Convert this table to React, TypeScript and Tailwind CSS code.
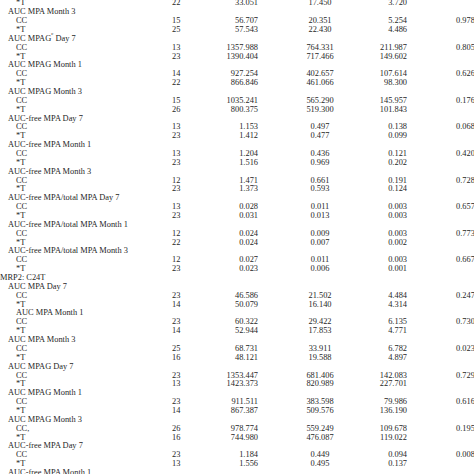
import React from 'react'

type Row = {
  label: React.ReactNode
  indent: 0 | 1 | 2
  n?: string
  mean?: string
  sd?: string
  se?: string
  p?: string
}

const g = (label: React.ReactNode, indent: 0 | 1 | 2 = 1): Row => ({ label, indent })
const cc = (n: string, mean: string, sd: string, se: string, p: string, label = 'CC'): Row => ({
  label,
  indent: 2,
  n,
  mean,
  sd,
  se,
  p
})
const t = (n: string, mean: string, sd: string, se: string): Row => ({ label: '*T', indent: 2, n, mean, sd, se })

const rows: Row[] = [
  t('22', '33.051', '17.450', '3.720'),
  g('AUC MPA Month 3'),
  cc('15', '56.707', '20.351', '5.254', '0.978'),
  t('25', '57.543', '22.430', '4.486'),
  g(
    <>
      AUC MPAG<sup className="text-[5px] relative -top-[1px] align-top">c</sup> Day 7
    </>
  ),
  cc('13', '1357.988', '764.331', '211.987', '0.805'),
  t('23', '1390.404', '717.466', '149.602'),
  g('AUC MPAG Month 1'),
  cc('14', '927.254', '402.657', '107.614', '0.626'),
  t('22', '866.846', '461.066', '98.300'),
  g('AUC MPAG Month 3'),
  cc('15', '1035.241', '565.290', '145.957', '0.176'),
  t('26', '800.375', '519.300', '101.843'),
  g('AUC-free MPA Day 7'),
  cc('13', '1.153', '0.497', '0.138', '0.068'),
  t('23', '1.412', '0.477', '0.099'),
  g('AUC-free MPA Month 1'),
  cc('13', '1.204', '0.436', '0.121', '0.420'),
  t('23', '1.516', '0.969', '0.202'),
  g('AUC-free MPA Month 3'),
  cc('12', '1.471', '0.661', '0.191', '0.728'),
  t('23', '1.373', '0.593', '0.124'),
  g('AUC-free MPA/total MPA Day 7'),
  cc('13', '0.028', '0.011', '0.003', '0.657'),
  t('23', '0.031', '0.013', '0.003'),
  g('AUC-free MPA/total MPA Month 1'),
  cc('12', '0.024', '0.009', '0.003', '0.773'),
  t('22', '0.024', '0.007', '0.002'),
  g('AUC-free MPA/total MPA Month 3'),
  cc('12', '0.027', '0.011', '0.003', '0.667'),
  t('23', '0.023', '0.006', '0.001'),
  g('MRP2: C24T', 0),
  g('AUC MPA Day 7'),
  cc('23', '46.586', '21.502', '4.484', '0.247'),
  t('14', '50.079', '16.140', '4.314'),
  g('AUC MPA Month 1', 2),
  cc('23', '60.322', '29.422', '6.135', '0.730'),
  t('14', '52.944', '17.853', '4.771'),
  g('AUC MPA Month 3'),
  cc('25', '68.731', '33.911', '6.782', '0.023'),
  t('16', '48.121', '19.588', '4.897'),
  g('AUC MPAG Day 7'),
  cc('23', '1353.447', '681.406', '142.083', '0.729'),
  t('13', '1423.373', '820.989', '227.701'),
  g('AUC MPAG Month 1'),
  cc('23', '911.511', '383.598', '79.986', '0.616'),
  t('14', '867.387', '509.576', '136.190'),
  g('AUC MPAG Month 3'),
  cc('26', '978.774', '559.249', '109.678', '0.195', 'CC,'),
  t('16', '744.980', '476.087', '119.022'),
  g('AUC-free MPA Day 7'),
  cc('23', '1.184', '0.449', '0.094', '0.008'),
  t('13', '1.556', '0.495', '0.137'),
  g('AUC-free MPA Month 1')
]

const indents = ['pl-0', 'pl-[8px]', 'pl-[16px]']

export default function App() {
  return (
    <div className="w-[474px] h-[474px] overflow-hidden bg-white text-[#1f1f1f] font-['Liberation_Serif','Times_New_Roman',serif] text-[8.4px]">
      <div className="-mt-[0.6px]">
        {rows.map((r, i) => (
          <div
            key={i}
            className="grid grid-cols-[172px_28px_58px_112px_37px_1fr] h-[8.87px] leading-[8.87px] whitespace-nowrap"
          >
            <div className={indents[r.indent]}>{r.label}</div>
            <div>{r.n}</div>
            <div className="text-right">{r.mean}</div>
            <div className="pl-[12px] text-center">{r.sd}</div>
            <div className="text-right">{r.se}</div>
            <div className="pl-[49px]">{r.p}</div>
          </div>
        ))}
      </div>
    </div>
  )
}
